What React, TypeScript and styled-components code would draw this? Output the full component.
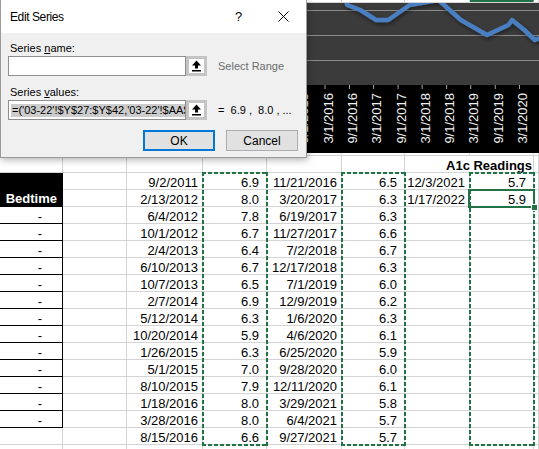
import React from "react";
import styled, { createGlobalStyle } from "styled-components";

const GlobalStyle = createGlobalStyle`
  html, body {
    margin: 0;
    padding: 0;
    background: #fff;
  }
  body {
    overflow: hidden;
    font-family: "Liberation Sans", Arial, sans-serif;
  }
`;

// ---------- data ----------

const left: [string, string][] = [
  ["9/2/2011", "6.9"],
  ["2/13/2012", "8.0"],
  ["6/4/2012", "7.8"],
  ["10/1/2012", "6.7"],
  ["2/4/2013", "6.4"],
  ["6/10/2013", "6.7"],
  ["10/7/2013", "6.5"],
  ["2/7/2014", "6.9"],
  ["5/12/2014", "6.3"],
  ["10/20/2014", "5.9"],
  ["1/26/2015", "6.3"],
  ["5/1/2015", "7.0"],
  ["8/10/2015", "7.9"],
  ["1/18/2016", "8.0"],
  ["3/28/2016", "8.0"],
  ["8/15/2016", "6.6"],
];

const middle: [string, string][] = [
  ["11/21/2016", "6.5"],
  ["3/20/2017", "6.3"],
  ["6/19/2017", "6.3"],
  ["11/27/2017", "6.6"],
  ["7/2/2018", "6.7"],
  ["12/17/2018", "6.3"],
  ["7/1/2019", "6.0"],
  ["12/9/2019", "6.2"],
  ["1/6/2020", "6.3"],
  ["4/6/2020", "6.1"],
  ["6/25/2020", "5.9"],
  ["9/28/2020", "6.0"],
  ["12/11/2020", "6.1"],
  ["3/29/2021", "5.8"],
  ["6/4/2021", "5.7"],
  ["9/27/2021", "5.7"],
];

const right: [string, string][] = [
  ["12/3/2021", "5.7"],
  ["1/17/2022", "5.9"],
];

// ---------- chart maths ----------

const DAY = 86400000;
const BASE = Date.UTC(2016, 2, 1);
const PX_PER_DAY = 0.1331;

const parseDate = (s: string) => {
  const [m, d, y] = s.split("/").map(Number);
  return Date.UTC(y, m - 1, d);
};
const xOf = (s: string) => 325 + ((parseDate(s) - BASE) / DAY) * PX_PER_DAY;
const yOf = (v: number) => 335 - 50 * v;

const linePoints = [...left, ...middle, ...right]
  .map(([d, v]) => `${xOf(d).toFixed(1)},${yOf(parseFloat(v)).toFixed(1)}`)
  .join(" ");

// axis categories that fall inside the visible part of the chart
const axisDates = [
  "9/1/2015",
  "3/1/2016",
  "9/1/2016",
  "3/1/2017",
  "9/1/2017",
  "3/1/2018",
  "9/1/2018",
  "3/1/2019",
  "9/1/2019",
  "3/1/2020",
];

// ---------- sheet ----------

const Page = styled.div`
  position: relative;
  width: 539px;
  height: 449px;
  overflow: hidden;
  background: #fff;
`;

const Sheet = styled.div`
  display: grid;
  grid-template-columns: 63px 64px 76px 64px 75px 63px 65px 64px 1fr;
  grid-template-rows: 3px repeat(27, 17px);
  font-family: "Liberation Sans", Arial, sans-serif;
  font-size: 13px;
  color: #000;
`;

type CellProps = {
  $r: number;
  $c: number;
  $rs?: number;
  $cs?: number;
  $pad?: number;
  $top?: number;
  $boxed?: boolean;
  $dark?: boolean;
  $bold?: boolean;
  $mark?: boolean;
};

const Cell = styled.div<CellProps>`
  grid-row: ${(p) => `${p.$r} / span ${p.$rs ?? 1}`};
  grid-column: ${(p) => `${p.$c} / span ${p.$cs ?? 1}`};
  box-sizing: border-box;
  display: flex;
  justify-content: flex-end;
  align-items: flex-start;
  padding-right: ${(p) => p.$pad ?? 4}px;
  padding-top: ${(p) => p.$top ?? 1}px;
  border-right: 1px solid ${(p) => (p.$boxed || p.$dark ? "#000" : "#d4d4d4")};
  border-bottom: 1px solid ${(p) => (p.$boxed || p.$dark ? "#000" : "#d4d4d4")};
  border-top: ${(p) => (p.$mark ? "2px solid #217346" : "none")};
  background: ${(p) => (p.$dark ? "#000" : "#fff")};
  color: ${(p) => (p.$dark ? "#fff" : "#000")};
  font-weight: ${(p) => (p.$bold ? 700 : 400)};
  line-height: 17px;
  white-space: nowrap;
  min-width: 0;
`;

const dash = (dir: string) =>
  `repeating-linear-gradient(${dir}, #217346 0 4px, transparent 4px 6px)`;

const Marquee = styled.div<{ $c: number }>`
  grid-row: 12 / span 16;
  grid-column: ${(p) => p.$c};
  margin: -1px;
  z-index: 2;
  pointer-events: none;
  background:
    ${dash("90deg")} top left / 100% 2px no-repeat,
    ${dash("90deg")} bottom left / 100% 2px no-repeat,
    ${dash("180deg")} top left / 2px 100% no-repeat,
    ${dash("180deg")} top right / 2px 100% no-repeat;
`;

const Selection = styled.div`
  grid-row: 13;
  grid-column: 8;
  margin: -1px -1px -1px -2px;
  border: 2px solid #217346;
  position: relative;
  z-index: 3;
  pointer-events: none;
`;

const FillHandle = styled.div`
  position: absolute;
  right: -5px;
  bottom: -5px;
  width: 5px;
  height: 5px;
  background: #217346;
  border: 1px solid #fff;
`;

// ---------- chart ----------

const ChartBox = styled.div`
  position: absolute;
  left: 0;
  top: 3px;
  width: 539px;
  height: 150px;
  background: #000;
`;

const Chart = () => (
  <ChartBox>
    <svg width="539" height="150" viewBox="0 3 539 150">
      <defs>
        <clipPath id="plot">
          <rect x="0" y="3" width="539" height="82" />
        </clipPath>
        <filter id="shade" x="-5%" y="-20%" width="110%" height="140%">
          <feGaussianBlur in="SourceAlpha" stdDeviation="2" />
          <feOffset dx="1" dy="2" />
          <feComponentTransfer>
            <feFuncA type="linear" slope="0.5" />
          </feComponentTransfer>
          <feMerge>
            <feMergeNode />
            <feMergeNode in="SourceGraphic" />
          </feMerge>
        </filter>
      </defs>
      <rect x="0" y="3" width="539" height="82" fill="#3b3b3b" />
      {[10, 35, 60].map((y) => (
        <line key={y} x1="0" x2="539" y1={y + 0.5} y2={y + 0.5} stroke="#8c8c8c" strokeWidth="1" />
      ))}
      <g clipPath="url(#plot)">
        <polyline
          points={linePoints}
          fill="none"
          stroke="#4a7fc1"
          strokeWidth="4.5"
          strokeLinejoin="round"
          strokeLinecap="round"
          filter="url(#shade)"
        />
      </g>
      {axisDates.map((d) => {
        const x = xOf(d);
        return (
          <g key={d}>
            <line x1={x} x2={x} y1="85" y2="89" stroke="#a6a6a6" strokeWidth="1" />
            <text
              transform={`translate(${(x + 3).toFixed(1)} 93) rotate(-90)`}
              textAnchor="end"
              dy="0.36em"
              fill="#f2f2f2"
              fontSize="13"
              fontFamily='"Liberation Sans", Arial, sans-serif'
            >
              {d}
            </text>
          </g>
        );
      })}
    </svg>
  </ChartBox>
);

// ---------- dialog ----------

const Dialog = styled.div`
  position: absolute;
  left: 0;
  top: 0;
  width: 307px;
  height: 158px;
  box-sizing: border-box;
  background: #f0f0f0;
  border: 1px solid #9a9a9a;
  border-top: none;
  box-shadow: 1px 2px 7px rgba(0, 0, 0, 0.3);
  font-family: "Liberation Sans", Arial, sans-serif;
  font-size: 11px;
  color: #000;
  display: flex;
  flex-direction: column;
  z-index: 10;
`;

const TitleBar = styled.div`
  height: 33px;
  flex-shrink: 0;
  background: #fff;
  display: flex;
  align-items: center;
`;

const Title = styled.div`
  flex: 1;
  padding-left: 9px;
  font-size: 12px;
  letter-spacing: -0.4px;
`;

const CaptionButton = styled.div`
  width: 45px;
  height: 33px;
  display: flex;
  align-items: center;
  justify-content: center;
  font-size: 13px;
`;

const Body = styled.div`
  display: flex;
  flex-direction: column;
  padding: 7px 8px 0 7px;
`;

const Label = styled.div<{ $gap?: number }>`
  height: 16px;
  line-height: 16px;
  padding-left: 2px;
  margin-top: ${(p) => p.$gap ?? 0}px;
  u {
    text-decoration-thickness: 1px;
    text-underline-offset: 1px;
  }
`;

const FieldRow = styled.div`
  display: flex;
  align-items: center;
  height: 20px;
`;

const TextBox = styled.div`
  width: 178px;
  height: 20px;
  box-sizing: border-box;
  border: 1px solid #8f8f8f;
  background: #fff;
  display: flex;
  align-items: center;
  padding-left: 2px;
  overflow: hidden;
  white-space: nowrap;
`;

const Selected = styled.span`
  background: #cccccc;
  line-height: 13px;
  padding-left: 1px;
`;

const RefButton = styled.div`
  width: 21px;
  height: 20px;
  flex-shrink: 0;
  box-sizing: border-box;
  border: 3px solid #c4c4c4;
  background: #fff;
  display: flex;
  align-items: center;
  justify-content: center;
`;

const SideText = styled.div<{ $muted?: boolean }>`
  margin-left: 11px;
  white-space: pre;
  color: ${(p) => (p.$muted ? "#6d6d6d" : "#000")};
`;

const ButtonRow = styled.div`
  display: flex;
  justify-content: flex-end;
  gap: 11px;
  margin-top: 10px;
`;

const Button = styled.div<{ $primary?: boolean }>`
  width: 72px;
  height: 21px;
  box-sizing: border-box;
  background: #e1e1e1;
  border: ${(p) => (p.$primary ? "2px solid #0078d7" : "1px solid #adadad")};
  display: flex;
  align-items: center;
  justify-content: center;
  font-size: 12px;
`;

const CollapseIcon = () => (
  <svg width="11" height="12" viewBox="0 0 11 12">
    <path d="M5.5 0.5 L10 5.5 L7 5.5 L7 8.5 L4 8.5 L4 5.5 L1 5.5 Z" fill="#000" />
    <rect x="1" y="10" width="9" height="1.5" fill="#000" />
  </svg>
);

const CloseIcon = () => (
  <svg width="11" height="11" viewBox="0 0 11 11">
    <path d="M0.5 0.5 L10.5 10.5 M10.5 0.5 L0.5 10.5" stroke="#000" strokeWidth="1" />
  </svg>
);

const EditSeries = () => (
  <Dialog>
    <TitleBar>
      <Title>Edit Series</Title>
      <CaptionButton>?</CaptionButton>
      <CaptionButton>
        <CloseIcon />
      </CaptionButton>
    </TitleBar>
    <Body>
      <Label>
        Series <u>n</u>ame:
      </Label>
      <FieldRow>
        <TextBox />
        <RefButton>
          <CollapseIcon />
        </RefButton>
        <SideText $muted>Select Range</SideText>
      </FieldRow>
      <Label $gap={8}>
        Series <u>v</u>alues:
      </Label>
      <FieldRow>
        <TextBox>
          <Selected>{"=('03-22'!$Y$27:$Y$42,'03-22'!$AA$"}</Selected>
        </TextBox>
        <RefButton>
          <CollapseIcon />
        </RefButton>
        <SideText>{"=  6.9 ,  8.0 , ..."}</SideText>
      </FieldRow>
      <ButtonRow>
        <Button $primary>OK</Button>
        <Button>Cancel</Button>
      </ButtonRow>
    </Body>
  </Dialog>
);

// ---------- page ----------

const COLS = 9;
const DATE_PAD = 4;
const NUM_PAD = 7;

const buildCells = () => {
  const cells: React.ReactNode[] = [];
  // top sliver and rows hidden under the chart
  for (let r = 1; r <= 10; r++) {
    for (let c = 1; c <= COLS; c++) {
      cells.push(<Cell key={`${r}-${c}`} $r={r} $c={c} $top={0} $mark={r === 1 && c === 8} />);
    }
  }
  // header row
  for (let c = 1; c <= 6; c++) {
    cells.push(<Cell key={`11-${c}`} $r={11} $c={c} />);
  }
  cells.push(
    <Cell key="11-7" $r={11} $c={7} $cs={2} $pad={1} $bold>
      A1c Readings
    </Cell>
  );
  cells.push(<Cell key="11-9" $r={11} $c={9} />);

  // data rows
  for (let i = 0; i < 16; i++) {
    const r = 12 + i;
    if (i === 0) {
      cells.push(
        <Cell key={`${r}-1`} $r={r} $c={1} $rs={2} $dark $bold $top={17} $pad={5}>
          Bedtime
        </Cell>
      );
    } else if (i >= 2 && i <= 14) {
      cells.push(
        <Cell key={`${r}-1`} $r={r} $c={1} $boxed $pad={20}>
          -
        </Cell>
      );
    } else if (i === 15) {
      cells.push(<Cell key={`${r}-1`} $r={r} $c={1} />);
    }
    cells.push(<Cell key={`${r}-2`} $r={r} $c={2} />);
    cells.push(
      <Cell key={`${r}-3`} $r={r} $c={3} $pad={DATE_PAD}>
        {left[i][0]}
      </Cell>
    );
    cells.push(
      <Cell key={`${r}-4`} $r={r} $c={4} $pad={NUM_PAD}>
        {left[i][1]}
      </Cell>
    );
    cells.push(
      <Cell key={`${r}-5`} $r={r} $c={5} $pad={DATE_PAD}>
        {middle[i][0]}
      </Cell>
    );
    cells.push(
      <Cell key={`${r}-6`} $r={r} $c={6} $pad={NUM_PAD}>
        {middle[i][1]}
      </Cell>
    );
    cells.push(
      <Cell key={`${r}-7`} $r={r} $c={7} $pad={DATE_PAD}>
        {right[i]?.[0]}
      </Cell>
    );
    cells.push(
      <Cell key={`${r}-8`} $r={r} $c={8} $pad={NUM_PAD}>
        {right[i]?.[1]}
      </Cell>
    );
    cells.push(<Cell key={`${r}-9`} $r={r} $c={9} />);
  }
  // trailing row
  for (let c = 1; c <= COLS; c++) {
    cells.push(<Cell key={`28-${c}`} $r={28} $c={c} />);
  }
  return cells;
};

export default function App() {
  return (
    <>
      <GlobalStyle />
      <Page>
        <Sheet>
          {buildCells()}
          <Marquee $c={4} />
          <Marquee $c={6} />
          <Marquee $c={8} />
          <Selection>
            <FillHandle />
          </Selection>
        </Sheet>
        <Chart />
        <EditSeries />
      </Page>
    </>
  );
}
